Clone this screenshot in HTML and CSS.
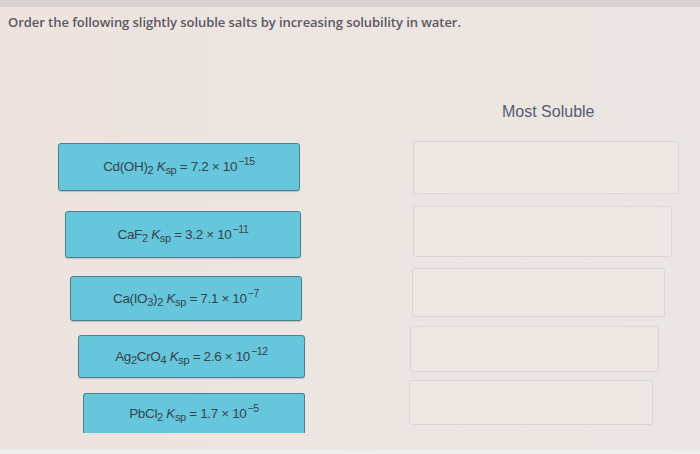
FILE: index.html
```html
<!DOCTYPE html>
<html>
<head>
<meta charset="utf-8">
<link rel="stylesheet" href="styles.css">
</head>
<body>
<div class="topbar"></div>
<div class="title">Order the following slightly soluble salts by increasing solubility in water.</div>
<div class="content">
  <div class="left">
    <div class="card c1"><span class="label">Cd(OH)<sub>2</sub> <i>K</i><sub>sp</sub> = 7.2 × 10<sup>−15</sup></span></div>
    <div class="card c2"><span class="label">CaF<sub>2</sub> <i>K</i><sub>sp</sub> = 3.2 × 10<sup>−11</sup></span></div>
    <div class="card c3"><span class="label">Ca(IO<sub>3</sub>)<sub>2</sub> <i>K</i><sub>sp</sub> = 7.1 × 10<sup>−7</sup></span></div>
    <div class="card c4"><span class="label">Ag<sub>2</sub>CrO<sub>4</sub> <i>K</i><sub>sp</sub> = 2.6 × 10<sup>−12</sup></span></div>
    <div class="card c5"><span class="label">PbCl<sub>2</sub> <i>K</i><sub>sp</sub> = 1.7 × 10<sup>−5</sup></span></div>
  </div>
  <div class="right">
    <div class="heading">Most Soluble</div>
    <div class="slot b1"></div>
    <div class="slot b2"></div>
    <div class="slot b3"></div>
    <div class="slot b4"></div>
    <div class="slot b5"></div>
  </div>
</div>
<div class="bottombar"></div>
</body>
</html>
```

FILE: styles.css
```css
html, body {
  margin: 0;
  padding: 0;
}
body {
  width: 700px;
  height: 454px;
  overflow: hidden;
  background: linear-gradient(90deg, #ede3df 0%, #ece5e1 50%, #ebe6e3 100%);
  font-family: "Liberation Sans", Arial, sans-serif;
  display: flex;
  flex-direction: column;
}
.topbar {
  height: 7px;
  background: #d8d2d0;
  flex: none;
}
.title {
  height: 30px;
  line-height: 30px;
  padding-left: 8px;
  font-family: "Open Sans", sans-serif;
  font-weight: 600;
  font-size: 13px;
  color: #5a5860;
  letter-spacing: -0.05px;
  flex: none;
}
.content {
  display: grid;
  grid-template-columns: 400px 300px;
  flex: 1;
  min-height: 0;
}
.left {
  display: flex;
  flex-direction: column;
  padding-top: 106px;
}
.card {
  background: #66c6dc;
  border: 1px solid #4f7f8c;
  border-radius: 3px;
  box-sizing: border-box;
  display: flex;
  align-items: center;
  justify-content: center;
  color: #36434e;
  box-shadow: 0 1px 1px rgba(60, 80, 90, 0.25);
}
.label {
  font-size: 13.5px;
  letter-spacing: -0.35px;
  line-height: 16px;
  white-space: nowrap;
}
.label i {
  font-style: italic;
}
.label sub {
  font-size: 11px;
  vertical-align: -3px;
  line-height: 0;
}
.label sup {
  font-size: 10.5px;
  vertical-align: 6px;
  line-height: 0;
  margin-left: 1px;
}
.c1 { margin-left: 58px; width: 242px; height: 48px; }
.c2 { margin-left: 65px; width: 236px; height: 47px; margin-top: 20px; }
.c3 { margin-left: 70px; width: 232px; height: 45px; margin-top: 18px; }
.c4 { margin-left: 78px; width: 227px; height: 43px; margin-top: 14px; }
.c5 { margin-left: 83px; width: 222px; height: 40px; margin-top: 15px; border-bottom: none; border-radius: 3px 3px 0 0; box-shadow: none; }

.right {
  display: flex;
  flex-direction: column;
}
.heading {
  margin-top: 65px;
  height: 20px;
  line-height: 20px;
  padding-left: 102px;
  font-size: 16px;
  color: #575b6e;
}
.slot {
  border: 1px solid #dad5d3;
  border-radius: 3px;
  box-sizing: border-box;
  background: #eee8e5;
}
.b1 { margin-left: 13px; width: 266px; height: 53px; margin-top: 19px; }
.b2 { margin-left: 13px; width: 259px; height: 51px; margin-top: 12px; }
.b3 { margin-left: 12px; width: 253px; height: 49px; margin-top: 11px; }
.b4 { margin-left: 10px; width: 249px; height: 46px; margin-top: 9px; }
.b5 { margin-left: 9px; width: 244px; height: 45px; margin-top: 8px; }
.bottombar {
  height: 4px;
  background: #f1edeb;
  flex: none;
}
```
